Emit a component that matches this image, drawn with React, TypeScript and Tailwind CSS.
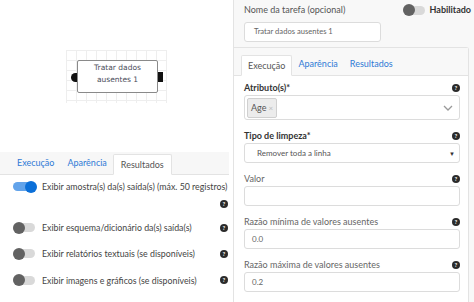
import React from "react";

const HelpIcon: React.FC = () => (
    <span className="flex h-[8px] w-[8px] shrink-0 items-center justify-center rounded-full bg-[#2b2b2b] text-[6px] font-bold leading-none text-white">
        ?
    </span>
);

const Toggle: React.FC<{ on?: boolean }> = ({ on }) => (
    <span className="relative flex h-[12px] w-[24px] shrink-0 items-center">
        <span
            className={
                on
                    ? "h-[9px] w-[22px] rounded-full bg-[#62a3ea]"
                    : "h-[9px] w-[22px] rounded-full bg-[#d9d9d9]"
            }
        />
        <span
            className={
                on
                    ? "absolute right-0 top-0 h-[12px] w-[12px] rounded-full bg-[#0b6fd8]"
                    : "absolute left-0 top-0 h-[12px] w-[12px] rounded-full bg-[#626262]"
            }
        />
    </span>
);

const Field: React.FC<{
    label: string;
    bold?: boolean;
    children: React.ReactNode;
    className?: string;
}> = ({ label, bold, children, className }) => (
    <div className={className}>
        <div className="flex h-[14px] items-center justify-between">
            <span
                className={
                    bold
                        ? "text-[9px] font-bold text-[#333]"
                        : "text-[9px] text-[#666]"
                }
            >
                {label}
            </span>
            <HelpIcon />
        </div>
        {children}
    </div>
);

const Canvas: React.FC = () => (
    <div className="relative h-[152px] bg-white">
        <div className="absolute left-[66px] top-[50px] h-[53px] w-[101px] bg-[linear-gradient(to_right,#eeeeee_1px,transparent_1px),linear-gradient(to_bottom,#eeeeee_1px,transparent_1px)] bg-[size:10px_10px]" />
        <div className="absolute left-[71px] top-[73px] h-[9px] w-[6px] rounded-l-full bg-[#111]" />
        <div className="absolute left-[77px] top-[60px] flex h-[33px] w-[81px] flex-col items-center rounded-[2px] border border-[#8a8a8a] bg-white pt-[1px] font-['DejaVu_Sans',sans-serif] text-[7.5px] leading-[12px] text-[#4a4d5a]">
            <span>Tratar dados</span>
            <span>ausentes 1</span>
        </div>
        <div className="absolute left-[158px] top-[72px] h-[10px] w-[5px] bg-[#111]" />
    </div>
);

const BottomPanel: React.FC = () => {
    const rows = [
        "Exibir esquema/dicionário da(s) saída(s)",
        "Exibir relatórios textuais (se disponíveis)",
        "Exibir imagens e gráficos (se disponíveis)",
    ];

    return (
        <div className="flex flex-1 flex-col pr-[4px]">
            <div className="flex h-[23px] items-end border-b border-[#e3e3e3] bg-[#f7f7f7] pl-[17px] text-[9px]">
                <span className="mb-[5px] text-[#2f7ad6]">Execução</span>
                <span className="mb-[5px] ml-[13px] text-[#2f7ad6]">
                    Aparência
                </span>
                <span className="-mb-px ml-[6px] flex h-[21px] items-center rounded-t-[2px] border border-b-white border-[#e3e3e3] bg-white px-[7px] text-[#555]">
                    Resultados
                </span>
            </div>
            <div className="flex items-center gap-[5px] pl-[13px] pt-[5px]">
                <Toggle on />
                <span className="whitespace-nowrap text-[8.8px] text-[#444]">
                    Exibir amostra(s) da(s) saída(s) (máx. 50 registros)
                </span>
            </div>
            <div className="mt-[7px] flex justify-end pr-[1px]">
                <HelpIcon />
            </div>
            {rows.map((row, index) => (
                <div
                    key={index}
                    className="mt-[13px] flex items-center gap-[5px] pl-[13px] pr-[1px] first:mt-[11px]"
                >
                    <Toggle />
                    <span className="flex-1 whitespace-nowrap text-[8.8px] text-[#444]">
                        {row}
                    </span>
                    <HelpIcon />
                </div>
            ))}
        </div>
    );
};

const SidePanel: React.FC = () => (
    <div className="flex w-[241px] flex-col border-l border-[#e3e3e3] bg-[#f8f8f8]">
        <div className="pl-[10px]">
            <div className="flex h-[20px] items-center justify-between">
                <span className="text-[9px] text-[#555]">
                    Nome da tarefa (opcional)
                </span>
                <div className="flex items-center gap-[3px]">
                    <Toggle />
                    <span className="whitespace-nowrap pr-[3px] text-[9px] font-bold text-[#333]">
                        Habilitado
                    </span>
                </div>
            </div>
            <div className="mt-[2px] flex h-[20px] w-[137px] items-center rounded-[3px] border border-[#dcdcdc] bg-white pl-[9px] text-[7.6px] text-[#666]">
                Tratar dados ausentes 1
            </div>
        </div>
        <div className="mt-[5px] mr-[5px] flex flex-1 flex-col rounded-tr-[3px] border-r border-t border-[#e3e3e3] bg-white">
            <div className="flex h-[28px] items-end border-b border-[#e3e3e3] bg-[#f8f8f8] pl-[7px] text-[9px]">
                <span className="-mb-px flex h-[21px] items-center rounded-t-[2px] border border-b-white border-[#e3e3e3] bg-white px-[6px] text-[#555]">
                    Execução
                </span>
                <span className="mb-[5px] ml-[6px] text-[#2f7ad6]">
                    Aparência
                </span>
                <span className="mb-[5px] ml-[12px] text-[#2f7ad6]">
                    Resultados
                </span>
            </div>
            <div className="pl-[10px] pr-[8px] pt-[5px]">
                <Field label="Atributo(s)*" bold>
                    <div className="flex h-[25px] items-center justify-between rounded-[3px] border border-[#dcdcdc] pl-[2px] pr-[6px]">
                        <span className="flex h-[20px] items-center rounded-[2px] border border-[#d0d0d0] bg-[#ececec] px-[3px] text-[9px] text-[#555]">
                            Age
                            <span className="ml-[2px] text-[8px] text-[#bbb]">
                                ×
                            </span>
                        </span>
                        <svg
                            width="10"
                            height="6"
                            viewBox="0 0 10 6"
                            fill="none"
                            stroke="#999"
                            strokeWidth="1.3"
                        >
                            <path d="M1 1l4 4 4-4" />
                        </svg>
                    </div>
                </Field>
                <Field label="Tipo de limpeza*" bold className="mt-[9px]">
                    <div className="flex h-[20px] items-center justify-between rounded-[3px] border border-[#dcdcdc] pl-[12px] pr-[4px] text-[8px] text-[#555]">
                        <span>Remover toda a linha</span>
                        <span className="text-[6px] text-[#333]">▼</span>
                    </div>
                </Field>
                <Field label="Valor" className="mt-[9px]">
                    <div className="h-[20px] rounded-[3px] border border-[#dcdcdc]" />
                </Field>
                <Field
                    label="Razão mínima de valores ausentes"
                    className="mt-[9px]"
                >
                    <div className="flex h-[20px] items-center rounded-[3px] border border-[#dcdcdc] pl-[7px] text-[8px] text-[#666]">
                        0.0
                    </div>
                </Field>
                <Field
                    label="Razão máxima de valores ausentes"
                    className="mt-[9px]"
                >
                    <div className="flex h-[20px] items-center rounded-[3px] border border-[#dcdcdc] pl-[7px] text-[8px] text-[#666]">
                        0.2
                    </div>
                </Field>
            </div>
        </div>
    </div>
);

const App: React.FC = () => {
    return (
        <div className="flex h-[302px] w-[474px] overflow-hidden bg-white font-['Lato',sans-serif]">
            <div className="flex w-[233px] flex-col">
                <Canvas />
                <BottomPanel />
            </div>
            <SidePanel />
        </div>
    );
};

export default App;
